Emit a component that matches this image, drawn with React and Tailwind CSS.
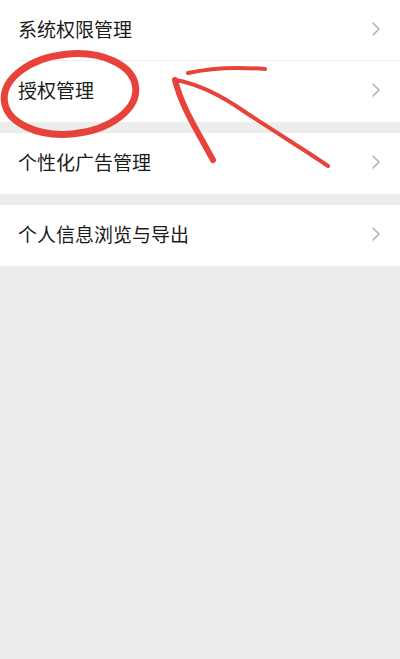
import React from 'react';

const Chevron = () => (
  <svg width="10" height="16" viewBox="0 0 10 16" className="shrink-0">
    <path d="M2 2 L8 8 L2 14" fill="none" stroke="#b3b3b3" strokeWidth="1.6" strokeLinecap="round" strokeLinejoin="round" />
  </svg>
);

const Row = ({ label, divider }) => (
  <div className="flex items-center h-[61px] pl-[18px] pr-[19px] pb-[3px] bg-white relative">
    <span className="flex-1 text-[19px] text-[#1b1b1b]">{label}</span>
    <Chevron />
    {divider && <div className="absolute left-[18px] right-0 bottom-0 h-px bg-[#eeeeee]" />}
  </div>
);

const App = () => {
  return (
    <div
      className="relative w-[400px] h-[659px] bg-[#ededed] overflow-hidden"
      style={{ fontFamily: '"Noto Sans CJK SC", "Noto Sans", sans-serif' }}
    >
      <div className="flex flex-col">
        <Row label="系统权限管理" divider />
        <Row label="授权管理" />
        <div className="h-[11px]" />
        <Row label="个性化广告管理" />
        <div className="h-[11px]" />
        <Row label="个人信息浏览与导出" />
      </div>

      {/* red hand-drawn annotation */}
      <svg className="absolute left-0 top-0 pointer-events-none" width="400" height="300" viewBox="0 0 400 300">
        <ellipse cx="70" cy="94" rx="66" ry="40" transform="rotate(-6 70 94)" fill="none" stroke="#e8433b" strokeWidth="7" />
        <path d="M213 160 C198 132 182 108 175 80" fill="none" stroke="#e8433b" strokeWidth="6" strokeLinecap="round" />
        <path d="M175 80 C200 84 225 98 245 112 C275 132 305 150 328 166" fill="none" stroke="#e8433b" strokeWidth="4" strokeLinecap="round" />
        <path d="M188 73 C210 68 240 67 265 69" fill="none" stroke="#e8433b" strokeWidth="4" strokeLinecap="round" />
      </svg>
    </div>
  );
};

export default App;
